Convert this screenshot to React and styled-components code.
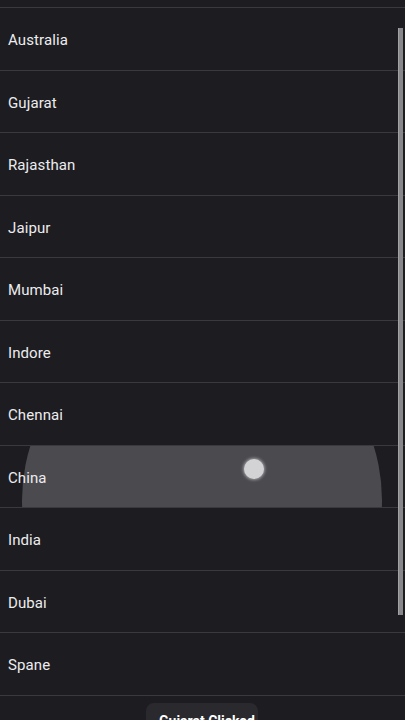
import React from "react";
import styled, { createGlobalStyle } from "styled-components";

const GlobalStyle = createGlobalStyle`
  html, body {
    margin: 0;
    padding: 0;
    background: #1d1c21;
  }
  * {
    box-sizing: border-box;
  }
`;

const Screen = styled.div`
  position: relative;
  width: 405px;
  height: 720px;
  padding-top: 7px;
  overflow: hidden;
  background-color: #1d1c21;
  font-family: Roboto, "Liberation Sans", sans-serif;
`;

const List = styled.ul`
  list-style: none;
  margin: 0;
  padding: 0;
  display: flex;
  flex-direction: column;
  border-top: 1px solid #3a393e;
`;

const Row = styled.li`
  position: relative;
  flex: none;
  height: 62.5px;
  display: flex;
  align-items: center;
  padding: 3px 0 0 8px;
  border-bottom: 1px solid #3a393e;
  overflow: hidden;
  color: #ececee;
  font-size: 15px;
  letter-spacing: 0.1px;
`;

const Label = styled.span`
  position: relative;
  z-index: 2;
`;

const Ripple = styled.span`
  position: absolute;
  left: 21.5px;
  top: -125.5px;
  width: 360px;
  height: 360px;
  border-radius: 50%;
  background-color: #4b4a4f;
  z-index: 1;
`;

const Touch = styled.span`
  position: absolute;
  left: 243.5px;
  top: 13.5px;
  width: 20px;
  height: 20px;
  border-radius: 50%;
  background-color: #d3d3d6;
  box-shadow: 0 0 3px 1px rgba(255, 255, 255, 0.45);
  z-index: 3;
`;

const Scrollbar = styled.div`
  position: absolute;
  top: 28px;
  right: 2px;
  width: 5px;
  height: 587px;
  background-color: #88888b;
  border-left: 1px solid #a2a2a5;
`;

const Toast = styled.div`
  position: absolute;
  left: 146px;
  top: 703px;
  width: 112px;
  height: 38px;
  padding: 10px 0 0 13px;
  border-radius: 8px;
  background-color: #2a292e;
  color: #ffffff;
  font-size: 14px;
  font-weight: 700;
  white-space: nowrap;
`;

const places = [
  "Australia",
  "Gujarat",
  "Rajasthan",
  "Jaipur",
  "Mumbai",
  "Indore",
  "Chennai",
  "China",
  "India",
  "Dubai",
  "Spane",
];

export default function App() {
  return (
    <Screen>
      <GlobalStyle />
      <List>
        {places.map((name) => (
          <Row key={name}>
            {name === "China" && <Ripple />}
            <Label>{name}</Label>
            {name === "China" && <Touch />}
          </Row>
        ))}
      </List>
      <Scrollbar />
      <Toast>Gujarat Clicked</Toast>
    </Screen>
  );
}
